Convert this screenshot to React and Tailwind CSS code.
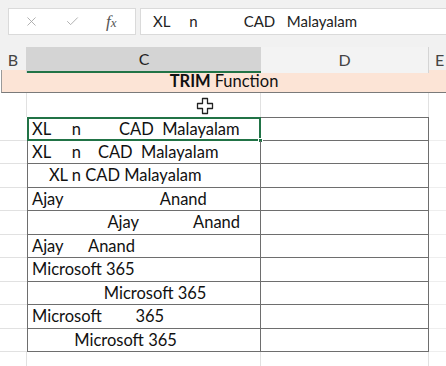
import { X, Check } from 'lucide-react'

const ROWS = [
  'XL     n         CAD  Malayalam',
  'XL     n    CAD  Malayalam',
  '    XL n CAD Malayalam',
  'Ajay                       Anand',
  '                  Ajay             Anand',
  'Ajay      Anand',
  'Microsoft 365',
  '                 Microsoft 365',
  'Microsoft        365',
  '          Microsoft 365',
]

const font = { fontFamily: 'Lato, "Open Sans", sans-serif' }

function CrossCursor() {
  return (
    <svg width="18" height="18" viewBox="0 0 18 18" className="absolute left-[196px] top-[97px]">
      <path
        d="M6.5 1.5h5v5h5v5h-5v5h-5v-5h-5v-5h5z"
        fill="#fff"
        stroke="#222"
        strokeWidth="1.3"
        strokeLinejoin="round"
      />
    </svg>
  )
}

export default function App() {
  return (
    <div
      className="relative w-[446px] h-[366px] overflow-hidden bg-white text-[#111]"
      style={font}
    >
      {/* formula bar */}
      <div className="h-[47px] bg-[#f1f1f1] flex items-start pt-[8px] gap-[4px] pl-[8px]">
        <div className="w-[128px] h-[27px] bg-white border border-[#dadada] flex items-center pl-[15px]">
          <X size={15} strokeWidth={1.4} className="text-[#a6a6a6]" />
          <Check size={15} strokeWidth={1.4} className="text-[#a6a6a6] ml-[26px]" />
          <span className="ml-[26px] text-[17px] italic text-[#555]" style={{ fontFamily: '"Liberation Serif", serif' }}>
            f<span className="text-[13px]">x</span>
          </span>
        </div>
        <div className="flex-1 h-[27px] bg-white border border-[#dadada] border-r-0 flex items-center pl-[12px]">
          <span className="whitespace-pre text-[15px] text-[#222]">{'XL     n            CAD   Malayalam'}</span>
        </div>
      </div>

      {/* column headers */}
      <div className="grid grid-cols-[27px_234px_168px_1fr] h-[23px] bg-[#f1f1f1] text-[16px] text-[#444]">
        <div className="flex items-center justify-center border-r border-[#d4d4d4]">B</div>
        <div className="flex items-center justify-center bg-[#d4d4d4] border-b-2 border-[#217346] text-[#222]">C</div>
        <div className="flex items-center justify-center border-r border-[#d4d4d4] bg-[#f3f3f3]">D</div>
        <div className="flex items-center pl-[6px]">E</div>
      </div>

      {/* title row */}
      <div className="h-[23px] bg-[#fce4d6] border-b border-[#7a7a7a] border-l border-l-[#9a9a9a] ml-[1px] flex items-center justify-center text-[16.5px]">
        <span className="font-bold">TRIM</span>
        <span className="ml-[4px]">Function</span>
      </div>

      {/* empty row */}
      <div className="grid grid-cols-[27px_234px_168px_1fr] h-[24px]">
        <div className="border-r border-[#e1e1e1]" />
        <div className="border-r border-[#e1e1e1]" />
        <div className="border-r border-[#e1e1e1]" />
        <div />
      </div>

      {/* data table */}
      {ROWS.map((text, i) => (
        <div
          key={i}
          className={`grid grid-cols-[27px_234px_168px_1fr] ${i % 2 === 0 ? 'h-[24px]' : 'h-[23px]'}`}
        >
          <div className="border-b border-[#e1e1e1]" />
          <div
            className={`relative flex items-center pl-[4px] border-l border-r border-b border-[#6e6e6e] ${
              i === 0 ? 'border-t' : ''
            }`}
          >
            <span className="whitespace-pre text-[16.5px] leading-none">{text}</span>
            {i === 0 && (
              <>
                <div className="absolute -left-[1px] -top-[1px] -right-[1px] -bottom-[1px] border-2 border-[#217346]" />
                <div className="absolute -right-[3px] -bottom-[3px] w-[5px] h-[5px] bg-[#217346] border border-white" />
              </>
            )}
          </div>
          <div className={`border-r border-b border-[#6e6e6e] ${i === 0 ? 'border-t' : ''}`} />
          <div className="border-b border-[#eeeeee]" />
        </div>
      ))}

      <div className="grid grid-cols-[27px_234px_168px_1fr] h-[14px]">
        <div className="border-r border-[#e1e1e1]" />
        <div className="border-r border-[#e1e1e1]" />
        <div className="border-r border-[#e1e1e1]" />
        <div />
      </div>

      <CrossCursor />
    </div>
  )
}
